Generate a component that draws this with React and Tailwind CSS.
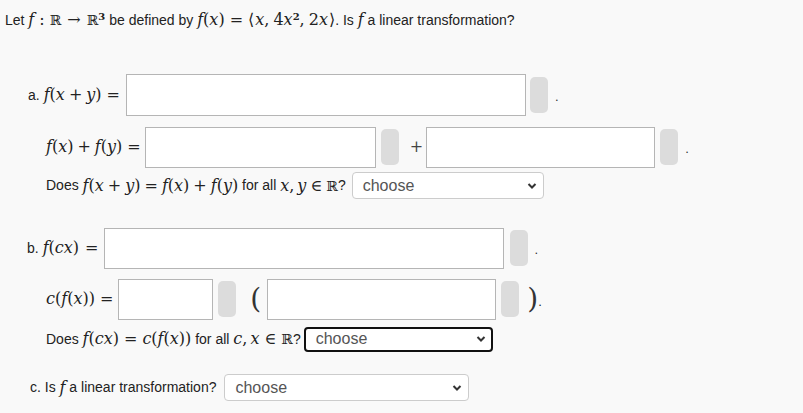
import React from 'react';

const serif = "font-['DejaVu_Serif','Liberation_Serif',serif]";
const sans = "font-['Liberation_Sans',Arial,sans-serif]";

function M({ children, className = '' }) {
  return <span className={`${serif} text-[16px] leading-none whitespace-nowrap inline-flex items-baseline ${className}`}>{children}</span>;
}

function V({ children }) {
  return <span className="italic">{children}</span>;
}

function Op({ children, s = 'mx-[5px]' }) {
  return <span className={s}>{children}</span>;
}

function R() {
  return <span className="font-['DejaVu_Serif',serif] text-[14px] not-italic">ℝ</span>;
}

function Box({ w, h = 'h-[41px]' }) {
  return <div className={`${w} ${h} shrink-0 bg-white border border-[#b5b5b5]`} />;
}

function Tile() {
  return <div className="w-[18px] h-[36px] shrink-0 rounded-[5px] bg-[#dcdcdc]" />;
}

function Dot() {
  return <span className="text-[13px] text-[#333] ml-[7px] mt-[4px]">.</span>;
}

function Choose({ w, focused }) {
  return (
    <div className={`relative ${w} shrink-0`}>
      <div
        className={`flex items-center h-full bg-white pl-[10px] text-[16px] text-[#555] ${sans} ${
          focused ? 'border-2 border-[#111] rounded-[4px]' : 'border border-[#ccc] rounded-[4px]'
        }`}
      >
        choose
      </div>
      <svg className="absolute right-[7px] top-1/2 -translate-y-1/2" width="10" height="7" viewBox="0 0 10 7">
        <path d="M1.5 1.5 L5 5 L8.5 1.5" fill="none" stroke="#333" strokeWidth="2" />
      </svg>
    </div>
  );
}

export default function App() {
  return (
    <div className={`w-[803px] h-[413px] bg-[#f9f9f9] text-[14px] text-[#222] ${sans} overflow-hidden`}>
      <div className="h-[40px] flex items-center pl-[5px]">
        <span>Let&nbsp;</span>
        <M><V>f</V><Op>:</Op><R /><Op s="mx-[6px]">→</Op><R /><sup className="text-[10px] font-bold">3</sup></M>
        <span>&nbsp;be defined by&nbsp;</span>
        <M>
          <V>f</V>(<V>x</V>)<Op>=</Op><span className="font-['DejaVu_Sans'] mr-[1px]">⟨</span><V>x</V>,<span className="ml-[4px]">4</span><V>x</V>
          <sup className="text-[10px] font-bold">2</sup>,<span className="ml-[4px]">2</span><V>x</V><span className="font-['DejaVu_Sans'] ml-[1px]">⟩</span>
        </M>
        <span>. Is&nbsp;</span>
        <M><V>f</V></M>
        <span>&nbsp;a linear transformation?</span>
      </div>

      <div className="mt-[34px] h-[42px] flex items-center pl-[28px]">
        <span className="mr-[4px]">a.</span>
        <M className="mr-[6px]"><V>f</V>(<V>x</V><Op s="mx-[4px]">+</Op><V>y</V>)<Op s="ml-[5px]">=</Op></M>
        <Box w="w-[400px]" h="h-[42px]" />
        <div className="ml-[4px]"><Tile /></div>
        <Dot />
      </div>

      <div className="mt-[11px] h-[40px] flex items-center pl-[46px]">
        <M className="mr-[4px]"><V>f</V>(<V>x</V>)<Op s="mx-[4px]">+</Op><V>f</V>(<V>y</V>)<Op s="ml-[5px]">=</Op></M>
        <Box w="w-[231px]" h="h-[41px]" />
        <div className="ml-[5px]"><Tile /></div>
        <M className="ml-[11px] mr-[3px] text-[15px] text-[#444]">+</M>
        <Box w="w-[229px]" h="h-[41px]" />
        <div className="ml-[5px]"><Tile /></div>
        <Dot />
      </div>

      <div className="mt-[5px] h-[27px] flex items-center pl-[46px]">
        <span>Does&nbsp;</span>
        <M><V>f</V>(<V>x</V><Op s="mx-[4px]">+</Op><V>y</V>)<Op s="mx-[4px]">=</Op><V>f</V>(<V>x</V>)<Op s="mx-[4px]">+</Op><V>f</V>(<V>y</V>)</M>
        <span>&nbsp;for all&nbsp;</span>
        <M><V>x</V>,<span className="ml-[3px]"><V>y</V></span><Op s="mx-[4px]">∈</Op><R /></M>
        <span className="mr-[6px]">?</span>
        <div className="h-[27px] flex"><Choose w="w-[192px]" /></div>
      </div>

      <div className="mt-[29px] h-[40px] flex items-center pl-[27px]">
        <span className="mr-[4px]">b.</span>
        <M className="mr-[5px]"><V>f</V>(<V>cx</V>)<Op s="ml-[6px]">=</Op></M>
        <Box w="w-[400px]" h="h-[41px]" />
        <div className="ml-[6px]"><Tile /></div>
        <Dot />
      </div>

      <div className="mt-[11px] h-[40px] flex items-center pl-[46px]">
        <M className="mr-[5px]"><V>c</V>(<V>f</V>(<V>x</V>))<Op s="ml-[5px]">=</Op></M>
        <Box w="w-[95px]" h="h-[41px]" />
        <div className="ml-[5px]"><Tile /></div>
        <span className={`${serif} text-[28px] font-light leading-none ml-[14px] mr-[6px] text-[#333]`}>(</span>
        <Box w="w-[229px]" h="h-[41px]" />
        <div className="ml-[5px]"><Tile /></div>
        <span className={`${serif} text-[28px] font-light leading-none ml-[8px] text-[#333]`}>)</span>
        <span className="text-[13px] mt-[6px]">.</span>
      </div>

      <div className="mt-[8px] h-[24px] flex items-center pl-[46px]">
        <span>Does&nbsp;</span>
        <M><V>f</V>(<V>cx</V>)<Op s="mx-[5px]">=</Op><V>c</V>(<V>f</V>(<V>x</V>))</M>
        <span>&nbsp;for all&nbsp;</span>
        <M><V>c</V>,<span className="ml-[3px]"><V>x</V></span><Op s="mx-[5px]">∈</Op><R /></M>
        <span className="mr-[3px]">?</span>
        <div className="h-[25px] flex"><Choose w="w-[189px]" focused /></div>
      </div>

      <div className="mt-[23px] h-[27px] flex items-center pl-[30px]">
        <span>c. Is&nbsp;</span>
        <M><V>f</V></M>
        <span className="mr-[8px]">&nbsp;a linear transformation?</span>
        <div className="h-[27px] flex"><Choose w="w-[245px]" /></div>
      </div>
    </div>
  );
}
